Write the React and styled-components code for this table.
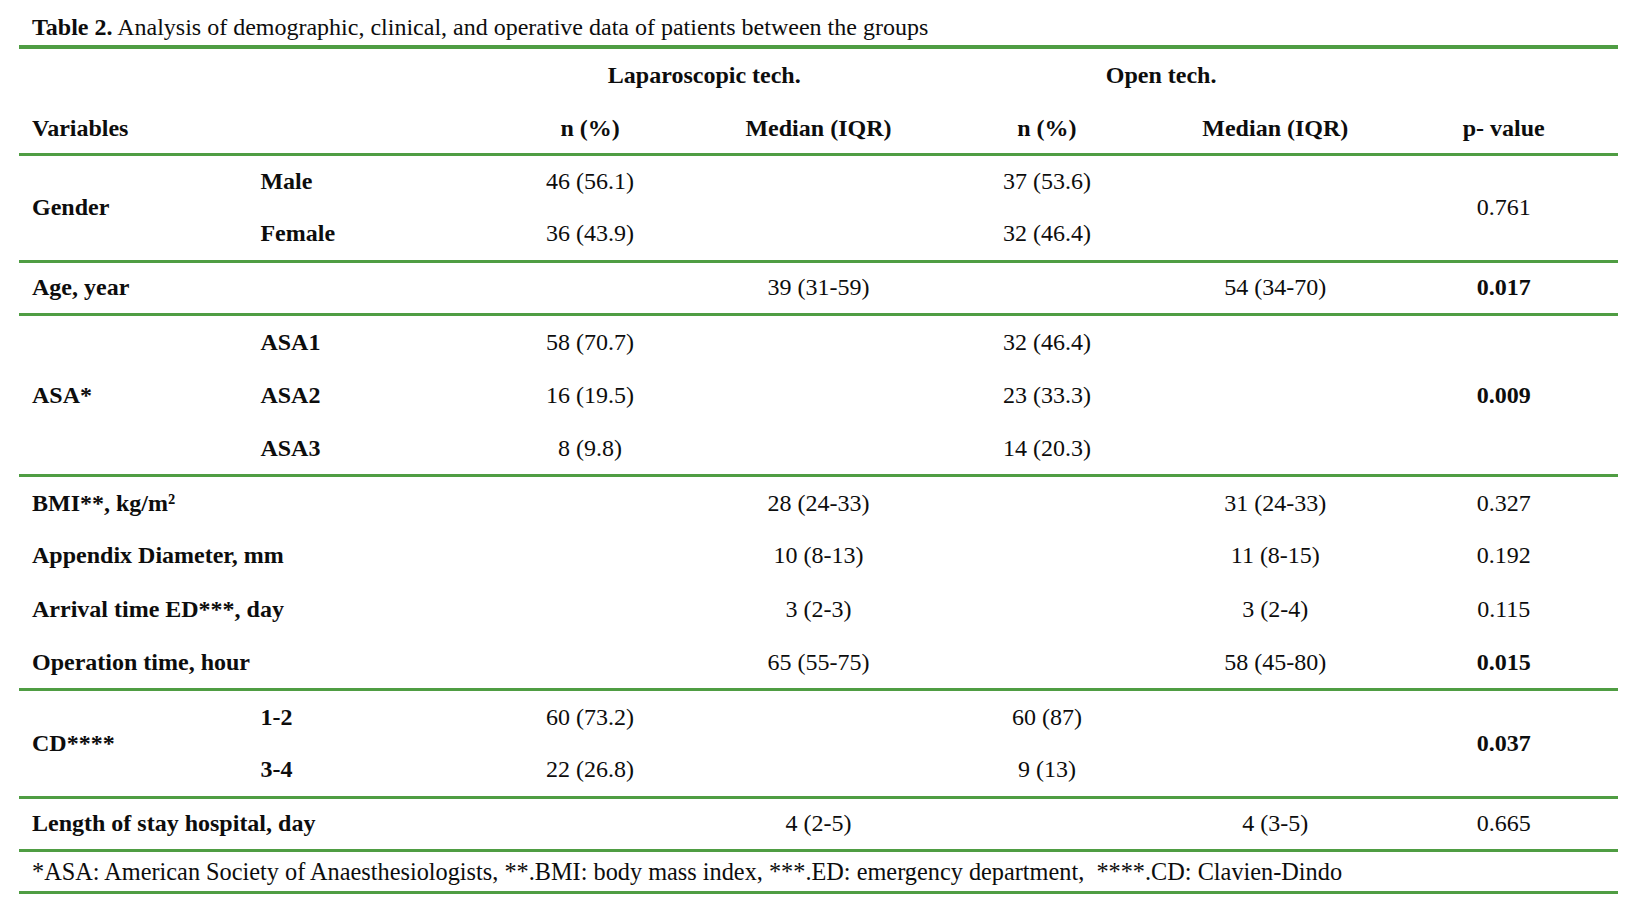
import React from "react";
import styled, { createGlobalStyle } from "styled-components";

const GREEN = "#4f9d43";

const GlobalStyle = createGlobalStyle`
  body {
    margin: 0;
    background: #fff;
    color: #0d0d0d;
    font-family: "Liberation Serif", "Times New Roman", serif;
  }
`;

const Page = styled.div`
  width: 1599px;
  padding: 13px 0 0 19px;
`;

const Title = styled.div`
  font-size: 24px;
  line-height: 28px;
  padding: 0 13px 4px;
  border-bottom: 4px solid ${GREEN};
  white-space: nowrap;
`;

const Table = styled.table`
  width: 1599px;
  table-layout: fixed;
  border-collapse: collapse;
  font-size: 24px;
`;

const Group = styled.tbody`
  border-bottom: 3px solid ${GREEN};
`;

const Head = styled.thead`
  border-bottom: 3px solid ${GREEN};
`;

const Row = styled.tr`
  height: ${(p) => p.$h || 53.6}px;
`;

const Cell = styled.td`
  padding: 0 0 0 ${(p) => (p.$left ? 13 : 0)}px;
  text-align: ${(p) => (p.$left ? "left" : "center")};
  vertical-align: middle;
  font-weight: ${(p) => (p.$bold ? 700 : 400)};
  white-space: nowrap;
`;

const HeadCell = styled.th`
  padding: ${(p) => (p.$low ? "3px" : "0")} 0 0 ${(p) => (p.$left ? 13 : 0)}px;
  text-align: ${(p) => (p.$left ? "left" : "center")};
  vertical-align: middle;
  font-weight: 700;
  white-space: nowrap;
`;

const Note = styled.td`
  height: 39px;
  padding: 0 0 0 13px;
  font-size: 24.3px;
  white-space: pre;
  vertical-align: middle;
`;

const groups = [
  {
    label: "Gender",
    p: "0.761",
    rows: [
      ["Male", "46 (56.1)", "", "37 (53.6)", ""],
      ["Female", "36 (43.9)", "", "32 (46.4)", ""],
    ],
  },
  { single: ["Age, year", "39 (31-59)", "54 (34-70)", "0.017", true] },
  {
    label: "ASA*",
    p: "0.009",
    bold: true,
    rows: [
      ["ASA1", "58 (70.7)", "", "32 (46.4)", ""],
      ["ASA2", "16 (19.5)", "", "23 (33.3)", ""],
      ["ASA3", "8 (9.8)", "", "14 (20.3)", ""],
    ],
  },
  {
    list: [
      ["BMI**, kg/m\u00b2", "28 (24-33)", "31 (24-33)", "0.327", false],
      ["Appendix Diameter, mm", "10 (8-13)", "11 (8-15)", "0.192", false],
      ["Arrival time ED***, day", "3 (2-3)", "3 (2-4)", "0.115", false],
      ["Operation time, hour", "65 (55-75)", "58 (45-80)", "0.015", true],
    ],
  },
  {
    label: "CD****",
    p: "0.037",
    bold: true,
    rows: [
      ["1-2", "60 (73.2)", "", "60 (87)", ""],
      ["3-4", "22 (26.8)", "", "9 (13)", ""],
    ],
  },
  { single: ["Length of stay hospital, day", "4 (2-5)", "4 (3-5)", "0.665", false] },
];

function MedianRow({ data }) {
  const [label, lap, open, p, bold] = data;
  return (
    <Row>
      <Cell $left $bold colSpan={2}>{label}</Cell>
      <Cell />
      <Cell>{lap}</Cell>
      <Cell />
      <Cell>{open}</Cell>
      <Cell $bold={bold}>{p}</Cell>
    </Row>
  );
}

function SplitGroup({ g }) {
  return (
    <Group>
      {g.rows.map((r, i) => (
        <Row key={r[0]}>
          {i === 0 && (
            <Cell $left $bold rowSpan={g.rows.length}>{g.label}</Cell>
          )}
          <Cell $left $bold>{r[0]}</Cell>
          <Cell>{r[1]}</Cell>
          <Cell>{r[2]}</Cell>
          <Cell>{r[3]}</Cell>
          <Cell>{r[4]}</Cell>
          {i === 0 && (
            <Cell $bold={g.bold} rowSpan={g.rows.length}>{g.p}</Cell>
          )}
        </Row>
      ))}
    </Group>
  );
}

export default function App() {
  return (
    <Page>
      <GlobalStyle />
      <Title>
        <b>Table 2.</b> Analysis of demographic, clinical, and operative data of patients between the groups
      </Title>
      <Table>
        <colgroup>
          {Array.from({ length: 7 }).map((_, i) => (
            <col key={i} />
          ))}
        </colgroup>
        <Head>
          <Row $h={52.5}>
            <HeadCell colSpan={2} />
            <HeadCell colSpan={2}>Laparoscopic tech.</HeadCell>
            <HeadCell colSpan={2}>Open tech.</HeadCell>
            <HeadCell />
          </Row>
          <Row $h={52.5}>
            <HeadCell $left $low colSpan={2}>Variables</HeadCell>
            <HeadCell $low>n (%)</HeadCell>
            <HeadCell $low>Median (IQR)</HeadCell>
            <HeadCell $low>n (%)</HeadCell>
            <HeadCell $low>Median (IQR)</HeadCell>
            <HeadCell $low>p- value</HeadCell>
          </Row>
        </Head>
        {groups.map((g, i) => {
          if (g.single) {
            return (
              <Group key={i}>
                <MedianRow data={g.single} />
              </Group>
            );
          }
          if (g.list) {
            return (
              <Group key={i}>
                {g.list.map((r) => (
                  <MedianRow key={r[0]} data={r} />
                ))}
              </Group>
            );
          }
          return <SplitGroup key={i} g={g} />;
        })}
        <Group>
          <tr>
            <Note colSpan={7}>
              {"*ASA: American Society of Anaesthesiologists, **.BMI: body mass index, ***.ED: emergency department,  ****.CD: Clavien-Dindo"}
            </Note>
          </tr>
        </Group>
      </Table>
    </Page>
  );
}
